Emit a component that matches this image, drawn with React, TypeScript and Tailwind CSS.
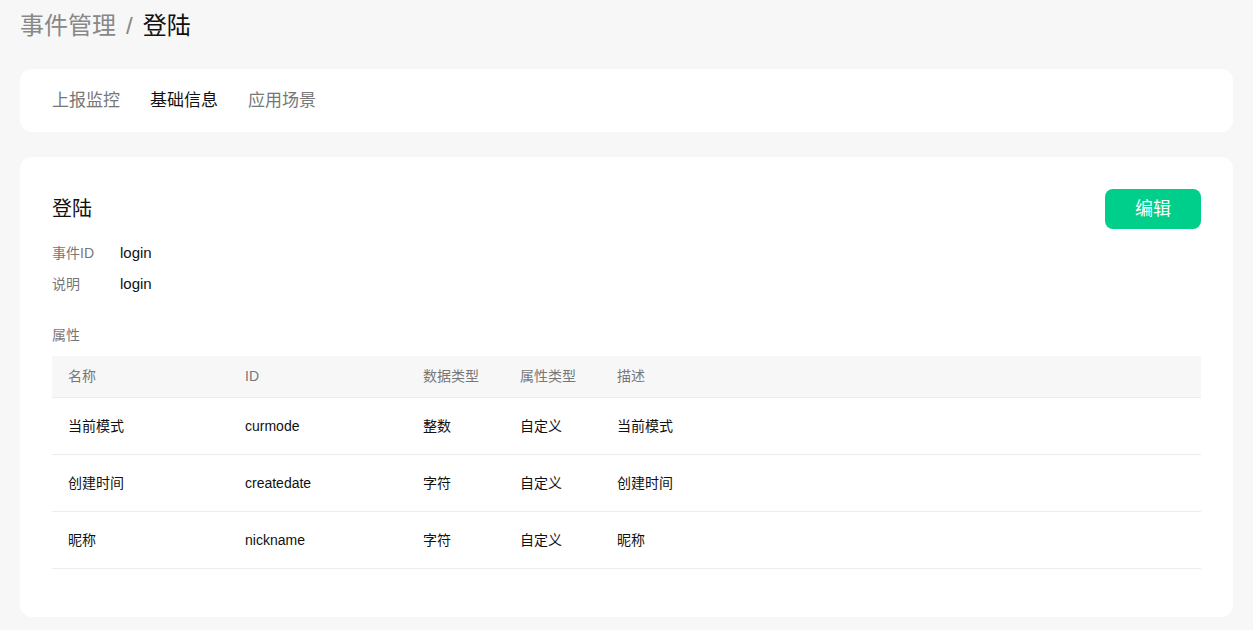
const rows = [
  { name: "当前模式", id: "curmode", dataType: "整数", attrType: "自定义", desc: "当前模式" },
  { name: "创建时间", id: "createdate", dataType: "字符", attrType: "自定义", desc: "创建时间" },
  { name: "昵称", id: "nickname", dataType: "字符", attrType: "自定义", desc: "昵称" },
];

const tabs = [
  { label: "上报监控", active: false },
  { label: "基础信息", active: true },
  { label: "应用场景", active: false },
];

const cols = "grid grid-cols-[177px_178px_97px_97px_1fr]";

export default function App() {
  return (
    <div
      className="min-h-[630px] bg-[#f7f7f7] px-5 pb-[10px]"
      style={{ fontFamily: '"Liberation Sans", "Noto Sans CJK SC", sans-serif' }}
    >
      {/* Breadcrumb */}
      <div className="flex h-[52px] items-center pb-[1px] text-[24px] leading-none">
        <span className="text-[#888888]">事件管理</span>
        <span className="mx-[10px] text-[#888888]">/</span>
        <span className="text-[#111111]">登陆</span>
      </div>

      {/* Tabs */}
      <div className="mt-[17px] flex h-[63px] items-center gap-[30px] rounded-xl bg-white px-8">
        {tabs.map((t) => (
          <span
            key={t.label}
            className={`text-[17px] leading-none ${t.active ? "text-[#111111]" : "text-[#777777]"}`}
          >
            {t.label}
          </span>
        ))}
      </div>

      {/* Detail card */}
      <div className="mt-[25px] rounded-xl bg-white px-8 pt-8 pb-12">
        <div className="flex items-start justify-between">
          <h2 className="mt-[5px] text-[20px] leading-[30px] font-normal text-[#111111]">登陆</h2>
          <button className="h-10 w-24 rounded-lg bg-[#00cf8b] text-[18px] text-white">编辑</button>
        </div>

        <div className="mt-[13px] flex flex-col gap-[9px] text-[14px]">
          <div className="flex h-[22px] items-center">
            <span className="w-[68px] text-[#777777]">事件ID</span>
            <span className="text-[15px] text-[#111111]">login</span>
          </div>
          <div className="flex h-[22px] items-center">
            <span className="w-[68px] text-[#777777]">说明</span>
            <span className="text-[15px] text-[#111111]">login</span>
          </div>
        </div>

        <div className="mt-[29px] h-[22px] text-[14px] leading-[22px] text-[#777777]">属性</div>

        {/* Table */}
        <div className="mt-[10px] text-[14px]">
          <div className={`${cols} h-[42px] items-center border-b border-[#ececec] bg-[#f7f7f7] text-[#777777]`}>
            <span className="px-4">名称</span>
            <span className="px-4">ID</span>
            <span className="px-4">数据类型</span>
            <span className="px-4">属性类型</span>
            <span className="px-4">描述</span>
          </div>
          {rows.map((r) => (
            <div key={r.id} className={`${cols} h-[57px] items-center border-b border-[#ececec] text-[#111111]`}>
              <span className="px-4">{r.name}</span>
              <span className="px-4">{r.id}</span>
              <span className="px-4">{r.dataType}</span>
              <span className="px-4">{r.attrType}</span>
              <span className="px-4">{r.desc}</span>
            </div>
          ))}
        </div>
      </div>
    </div>
  );
}
